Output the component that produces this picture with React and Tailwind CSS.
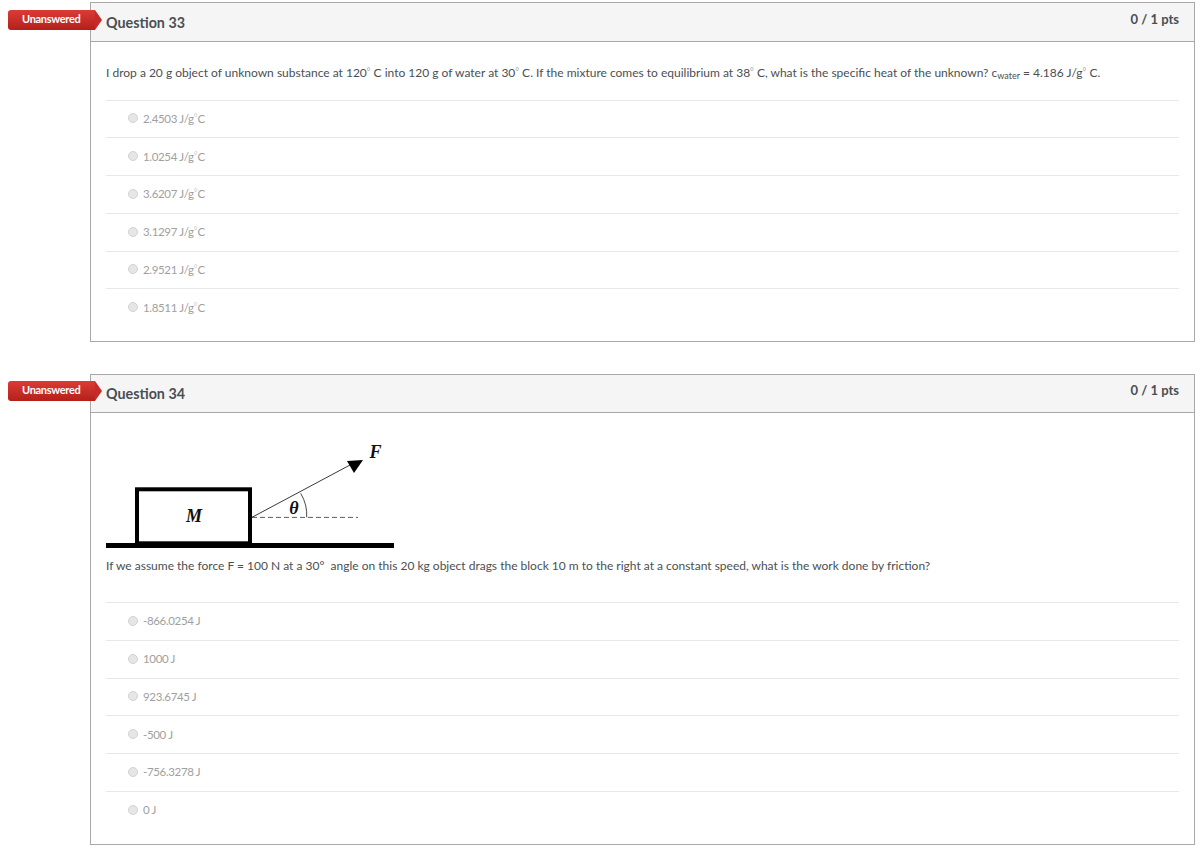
function Row({ text }) {
  return (
    <div className="h-[37.75px] border-t border-[#e8e8e8] flex items-center pl-[22px] pb-[1px]">
      <span className="w-[10px] h-[10px] rounded-full bg-[#e6e6e6] border border-[#d2d2d2] shrink-0" />
      <span className="ml-[5px] text-[11.5px] text-[#a0a0a0] tracking-[-0.35px]">{text}</span>
    </div>
  );
}
const Deg = () => <span className="text-[9px] leading-none relative -top-[2px] font-light">°</span>;
function Unit() {
  return <>J/g<Deg />{"\u200a"}C</>;
}
function Card({ n, children, className, headerClass, badgeClass, titleClass, ptsClass }) {
  return (
    <section className={"relative ml-[90px] w-[1105px] border border-[#a8a8a8] bg-white " + className}>
      <div className={"absolute -left-[83px] h-[20px] w-[87px] rounded-l-[3px] bg-gradient-to-b from-[#dc3b35] to-[#b3201c] text-white text-[11px] font-bold tracking-[-0.3px] flex items-center pl-[14px] pb-[1px] " + badgeClass}>
        Unanswered
        <span className="absolute left-full top-0 w-0 h-0 border-y-[10px] border-y-transparent border-l-[7px] border-l-[#c62c27]" />
      </div>
      <header className={"bg-[#f5f5f5] border-b border-[#a8a8a8] flex justify-between px-[15px] text-[#4a4f53] " + headerClass}>
        <h2 className={"text-[14.3px] font-bold leading-[18px] " + titleClass}>Question {n}</h2>
        <span className={"text-[13px] font-bold leading-[18px] " + ptsClass}>0 / 1 pts</span>
      </header>
      <div className="px-[15px]">{children}</div>
    </section>
  );
}
function Diagram() {
  const serif = "'Liberation Serif', serif";
  return (
    <svg width="290" height="108" viewBox="0 -30 290 108" className="block">
      <rect x="31" y="17.3" width="113" height="54" fill="none" stroke="#000" strokeWidth="4" />
      <rect x="0" y="71" width="288" height="5" fill="#000" />
      <line x1="146" y1="45.3" x2="244" y2="-7" stroke="#222" strokeWidth="0.9" />
      <polygon points="241,-11 257,-12 248,1" fill="#000" />
      <line x1="146" y1="45.4" x2="252" y2="45.4" stroke="#333" strokeWidth="0.8" strokeDasharray="5 3" />
      <path d="M 194.7 21.3 Q 201.5 33 200.7 45.3" fill="none" stroke="#333" strokeWidth="0.9" />
      <text x="88" y="50" textAnchor="middle" fontFamily={serif} fontStyle="italic" fontWeight="700" fontSize="18" fill="#111">M</text>
      <text x="188" y="42" textAnchor="middle" fontFamily={serif} fontStyle="italic" fontWeight="700" fontSize="18" fill="#111">θ</text>
      <text x="269.5" y="-14" textAnchor="middle" fontFamily={serif} fontStyle="italic" fontWeight="700" fontSize="18" fill="#111">F</text>
    </svg>
  );
}
export default function App() {
  const a = ["2.4503", "1.0254", "3.6207", "3.1297", "2.9521", "1.8511"];
  const b = ["-866.0254 J", "1000 J", "923.6745 J", "-500 J", "-756.3278 J", "0 J"];
  return (
    <div className="bg-white h-[848px] pt-[2px] font-['Lato','Open_Sans',sans-serif] overflow-hidden">
      <Card n={33} className="h-[340px]" headerClass="h-[39px]" badgeClass="top-[7px]" titleClass="mt-[11px]" ptsClass="mt-[7px]">
        <p className="h-[57.6px] pt-[22px] text-[12px] leading-[18px] text-[#4a4f53] whitespace-nowrap">
          I drop a 20 g object of unknown substance at 120<Deg /> C into 120 g of water at 30<Deg /> C. If the mixture comes to equilibrium at 38<Deg /> C, what is the specific heat of the unknown? c<sub className="text-[9px]">water</sub> = 4.186 J/g<Deg /> C.
        </p>
        {a.map((v) => <Row key={v} text={<>{v} <Unit /></>} />)}
      </Card>
      <Card n={34} className="h-[471px] mt-[32px]" headerClass="h-[38px]" badgeClass="top-[6px]" titleClass="mt-[10px]" ptsClass="mt-[6px]">
        <div className="pt-[29px]">
          <Diagram />
          <p className="h-[52px] pt-[6.5px] text-[12px] leading-[18px] text-[#4a4f53] whitespace-nowrap">
            If we assume the force F = 100 N at a 30°&nbsp; angle on this 20 kg object drags the block 10 m to the right at a constant speed, what is the work done by friction?
          </p>
        </div>
        {b.map((v) => <Row key={v} text={v} />)}
      </Card>
    </div>
  );
}
